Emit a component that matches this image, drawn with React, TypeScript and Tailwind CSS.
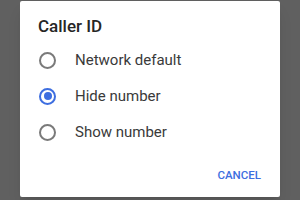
import React from "react"

const options = [
  { label: "Network default", checked: false },
  { label: "Hide number", checked: true },
  { label: "Show number", checked: false },
]

function Radio({ checked }: { checked: boolean }) {
  return (
    <div
      className={
        checked
          ? "w-[17px] h-[17px] rounded-full border-2 border-[#3d6ee0] flex items-center justify-center"
          : "w-[17px] h-[17px] rounded-full border-2 border-[#7a7a7a]"
      }
    >
      {checked && <div className="w-[8px] h-[8px] rounded-full bg-[#3d6ee0]" />}
    </div>
  )
}

export default function App() {
  return (
    <div
      className="w-[300px] h-[200px] bg-[#606060] overflow-hidden"
      style={{ fontFamily: "Roboto, 'Liberation Sans', sans-serif" }}
    >
      <div className="ml-[20px] mt-[1px] w-[260px] h-[196px] bg-white rounded-[2px] shadow-lg flex flex-col">
        <div className="pl-[18px] pt-[15px] h-[41px] text-[17px] leading-[20px] font-medium text-[#262626]">
          Caller ID
        </div>
        <div className="flex flex-col">
          {options.map((o) => (
            <div key={o.label} className="h-[36px] flex items-center pl-[19px]">
              <Radio checked={o.checked} />
              <span className="ml-[19px] text-[15px] text-[#3a3a3a]">{o.label}</span>
            </div>
          ))}
        </div>
        <div className="flex justify-end pr-[19px] mt-[17px]">
          <span className="text-[11.5px] font-medium text-[#3d6ee0]">CANCEL</span>
        </div>
      </div>
    </div>
  )
}
